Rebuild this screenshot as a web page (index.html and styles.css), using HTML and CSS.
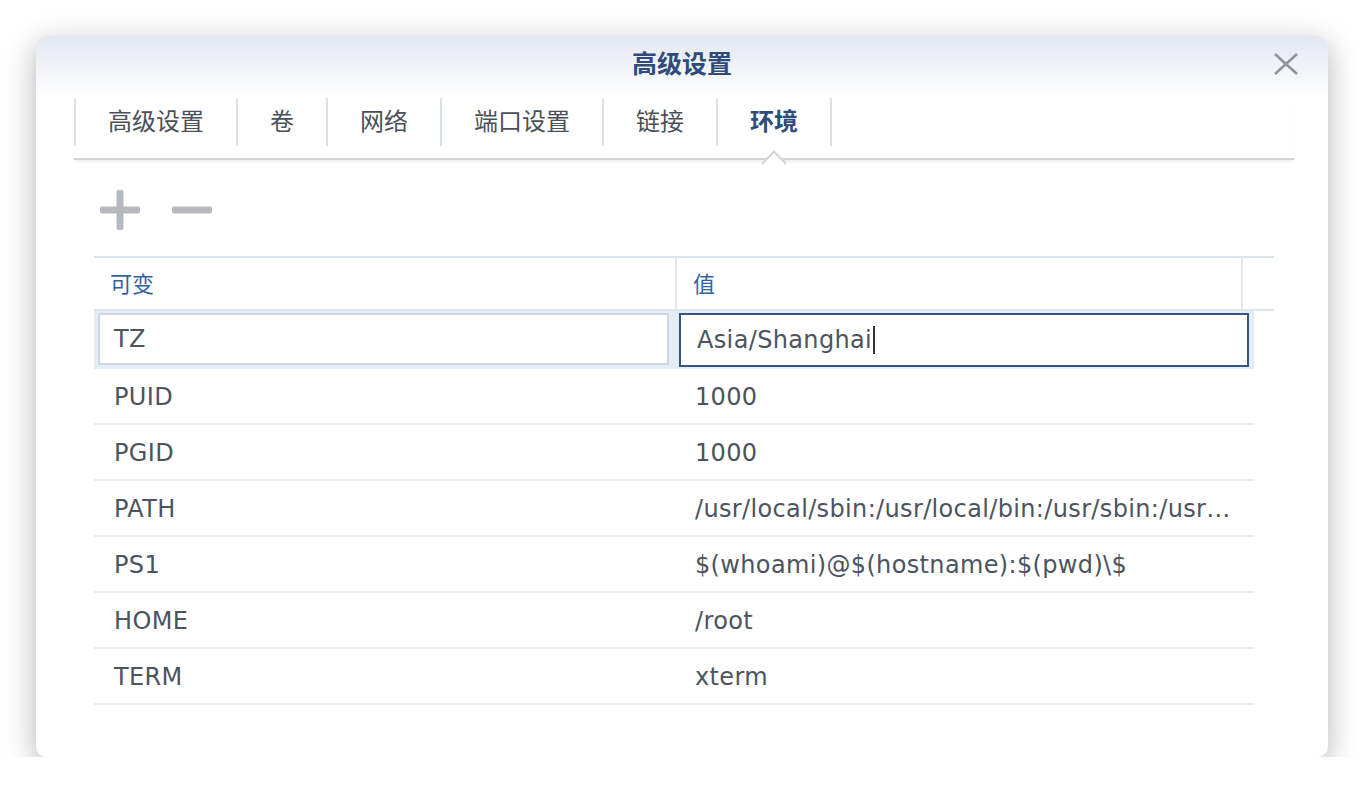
FILE: index.html
```html
<!DOCTYPE html>
<html lang="zh-CN">
<head>
    <meta charset="UTF-8">
    <title>高级设置</title>
    <link rel="stylesheet" href="styles.css">
</head>
<body>
    <div class="dialog">
        <div class="dialog-header">
            <span></span>
            <h1 class="dialog-title">高级设置</h1>
            <button class="close-btn" aria-label="关闭">
                <svg width="26" height="22" viewBox="0 0 26 22">
                    <path d="M2 1 L24 21 M24 1 L2 21" stroke="#8f9297" stroke-width="2.6" fill="none"/>
                </svg>
            </button>
        </div>

        <div class="tabs">
            <div class="tab">高级设置</div>
            <div class="tab">卷</div>
            <div class="tab">网络</div>
            <div class="tab">端口设置</div>
            <div class="tab">链接</div>
            <div class="tab active">环境</div>
        </div>

        <div class="content">
            <div class="toolbar">
                <button class="tool-btn" aria-label="新增">
                    <svg width="40" height="40" viewBox="0 0 40 40">
                        <rect x="0" y="16.5" width="40" height="7" rx="2" fill="#b6b9bd"/>
                        <rect x="16.5" y="0" width="7" height="40" rx="2" fill="#b6b9bd"/>
                    </svg>
                </button>
                <button class="tool-btn" aria-label="删除">
                    <svg width="40" height="40" viewBox="0 0 40 40">
                        <rect x="0" y="16.5" width="40" height="7" rx="2" fill="#b6b9bd"/>
                    </svg>
                </button>
            </div>

            <div class="grid">
                <div class="grid-head">
                    <div class="head-cell">可变</div>
                    <div class="head-cell">值</div>
                    <div class="head-cell"></div>
                </div>

                <div class="row editing">
                    <div class="edit-box">TZ</div>
                    <div class="edit-box focused">Asia/Shanghai<span class="caret"></span></div>
                </div>
                <div class="row">
                    <div class="cell">PUID</div>
                    <div class="cell">1000</div>
                </div>
                <div class="row">
                    <div class="cell">PGID</div>
                    <div class="cell">1000</div>
                </div>
                <div class="row">
                    <div class="cell">PATH</div>
                    <div class="cell" title="/usr/local/sbin:/usr/local/bin:/usr/sbin:/usr/bin:/sbin:/bin">/usr/local/sbin:/usr/local/bin:/usr/sbin:/usr…</div>
                </div>
                <div class="row">
                    <div class="cell">PS1</div>
                    <div class="cell">$(whoami)@$(hostname):$(pwd)\$</div>
                </div>
                <div class="row">
                    <div class="cell">HOME</div>
                    <div class="cell">/root</div>
                </div>
                <div class="row">
                    <div class="cell">TERM</div>
                    <div class="cell">xterm</div>
                </div>
            </div>
        </div>
    </div>
</body>
</html>
```

FILE: styles.css
```css
body {
    margin: 0;
    padding: 36px 0 0 36px;
    background-color: #fff;
    font-family: "DejaVu Sans", "Noto Sans CJK SC", sans-serif;
    color: #4c545e;
}

.dialog {
    width: 1292px;
    height: 721px;
    box-sizing: border-box;
    background-color: #fff;
    border-radius: 10px;
    box-shadow: 0 8px 30px rgba(0, 0, 0, 0.3);
    overflow: hidden;
}

.dialog-header {
    display: grid;
    grid-template-columns: 1fr auto 1fr;
    align-items: start;
    height: 62px;
    background: linear-gradient(to bottom, #e3e8f0 0%, #f3f5f9 60%, #fff 100%);
}

.dialog-title {
    margin: 0;
    font-family: "Noto Sans CJK SC", sans-serif;
    font-size: 25px;
    font-weight: bold;
    color: #2e4b7b;
    line-height: 52px;
}

.close-btn {
    justify-self: end;
    margin: 17px 29px 0 0;
    padding: 0;
    border: none;
    background: none;
    display: flex;
}

.tabs {
    display: flex;
    height: 62px;
    box-sizing: border-box;
    margin: 0 34px 0 38px;
    border-bottom: 2px solid #d3d3d3;
    box-shadow: 0 3px 3px -1px rgba(0, 0, 0, 0.06);
}

.tab {
    position: relative;
    display: flex;
    align-items: center;
    height: 48px;
    box-sizing: border-box;
    padding: 0 32px 5px;
    border-left: 2px solid #d7e1ec;
    font-family: "Noto Sans CJK SC", sans-serif;
    font-size: 24px;
    color: #4b5058;
}

.tab:last-child {
    border-right: 2px solid #d7e1ec;
}

.tab.active {
    font-weight: bold;
    color: #2e4b7b;
}

/* little notch pointing at the active tab */
.tab.active::after {
    content: "";
    position: absolute;
    left: 50%;
    top: 56px;
    width: 16px;
    height: 16px;
    margin-left: -9px;
    background-color: #fff;
    border-top: 2px solid #d3d3d3;
    border-left: 2px solid #d3d3d3;
    transform: rotate(45deg);
}

.content {
    padding: 0 54px 0 58px;
}

.toolbar {
    display: flex;
    gap: 32px;
    height: 96px;
    box-sizing: border-box;
    padding: 30px 0 0 6px;
}

.tool-btn {
    padding: 0;
    border: none;
    background: none;
    width: 40px;
    height: 40px;
    display: flex;
}

.grid-head {
    display: grid;
    grid-template-columns: 581px 566px 1fr;
    height: 55px;
    box-sizing: border-box;
    border-top: 2px solid #dce5ef;
    border-bottom: 2px solid #dce5ef;
}

.head-cell {
    display: flex;
    align-items: center;
    padding: 0 0 3px 16px;
    font-family: "Noto Sans CJK SC", sans-serif;
    font-size: 22px;
    color: #3463a1;
}

.head-cell + .head-cell {
    border-left: 2px solid #e3e9f1;
}

.row {
    display: grid;
    grid-template-columns: 581px 1fr;
    width: 1160px;
    height: 56px;
    box-sizing: border-box;
    border-bottom: 2px solid #e9eef3;
    font-size: 24px;
    letter-spacing: 0.35px;
}

.cell {
    display: block;
    padding: 0 12px 0 20px;
    min-width: 0;
    line-height: 56px;
    white-space: nowrap;
    overflow: hidden;
    text-overflow: ellipsis;
}

.row.editing {
    grid-template-columns: 571px 570px;
    gap: 10px;
    height: 58px;
    padding: 2px 5px 0 4px;
    border-bottom: none;
    background-color: #e4ecf6;
}

.edit-box {
    display: flex;
    align-items: center;
    height: 52px;
    box-sizing: border-box;
    padding-left: 14px;
    background-color: #fff;
    border: 2px solid #cfd6df;
}

.edit-box.focused {
    height: 54px;
    padding-left: 16px;
    border-color: #345487;
}

.caret {
    display: inline-block;
    width: 2px;
    height: 28px;
    margin-left: 1px;
    background-color: #333;
}
```
